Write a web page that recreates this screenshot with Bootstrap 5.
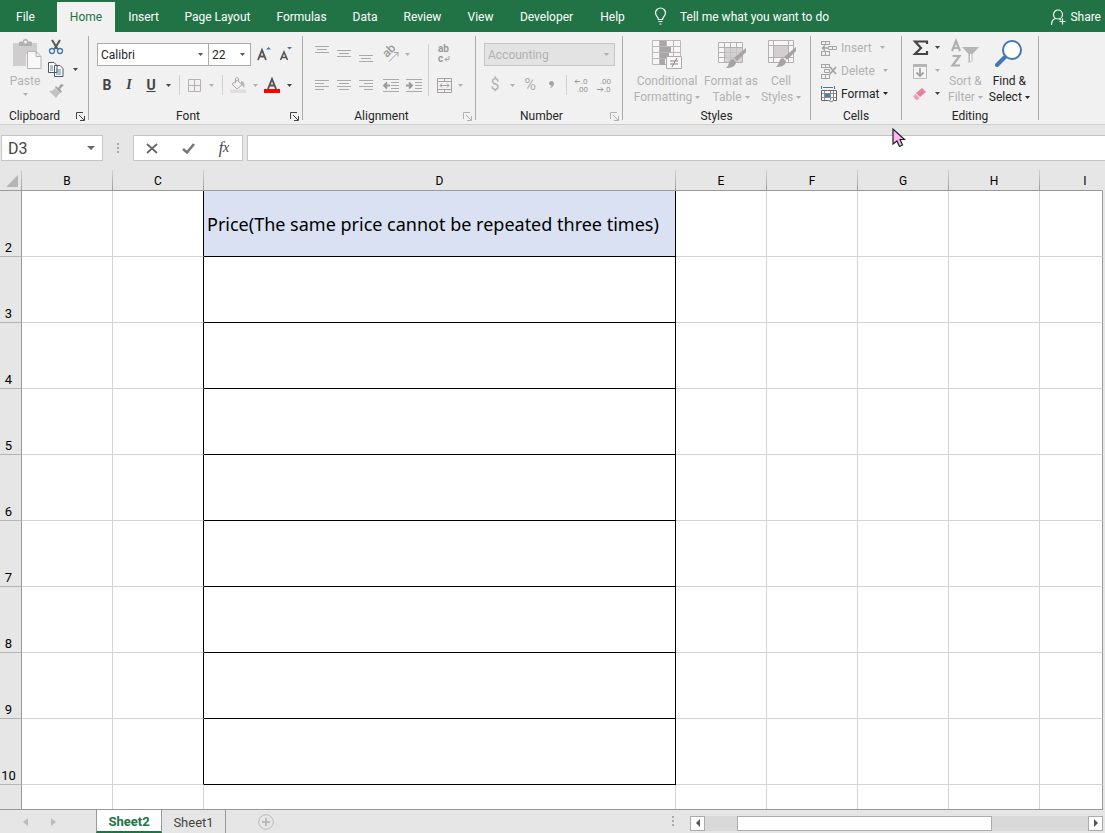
<!DOCTYPE html>
<html lang="en">
<head>
<meta charset="utf-8">
<meta name="viewport" content="width=device-width, initial-scale=1">
<title>Spreadsheet</title>
<link href="https://cdn.jsdelivr.net/npm/bootstrap@5.3.0/dist/css/bootstrap.min.css" rel="stylesheet">
<style>
  :root { --green: #217346; --chrome: #e6e6e6; --ribbon: #f1f1f1; --line: #ababab; --off: #b1b1b1; --ink: #444; }
  body { font: 12px/16px Roboto, "Liberation Sans", sans-serif; color: #262626; background: var(--chrome); }
  button, .menu a { white-space: nowrap; }
  svg { display: block; flex: none; overflow: visible; }

  /* menu strip */
  .menu { background: var(--green); height: 32px; padding-top: 2px; }
  .menu-tabs { display: grid; grid-template-columns: 57px 58px 57px 91px 77px 50px 65px 51px 81px 51px; }
  .menu a { color: #fff; text-decoration: none; line-height: 30px; text-align: center; }
  .menu .file-tab { text-align: left; padding-left: 16px; }
  .menu .on { background: var(--ribbon); color: var(--green); }

  /* ribbon */
  .ribbon { background: var(--ribbon); border-bottom: 1px solid #cfcfcf; height: 93px; padding-top: 4px; }
  .grp { display: flex; flex-direction: column; border-right: 1px solid var(--line); height: 84px; flex: none; }
  .grp-body { height: 72px; flex: none; padding-left: 8px; }
  .grp-body.tight { padding-left: 6px; }
  .grp-body.two-rows { padding-top: 7px; }
  .grp-name { display: grid; grid-template-columns: 1fr 15px; line-height: 16px; text-align: center; }
  .g-clip { width: 89px; } .g-font { width: 214px; } .g-align { width: 173px; }
  .g-num { width: 147px; } .g-style { width: 188px; } .g-cell { width: 91px; } .g-edit { width: 137px; }
  .tool { border: 0; background: none; padding: 0; color: var(--ink); display: flex; align-items: center; justify-content: center; height: 22px; }
  .tool:disabled { color: var(--off); }
  .big { flex-direction: column; justify-content: flex-start; height: 72px; line-height: 16px; }
  .big svg.pic { margin: 2px 0 3px; }
  .line { display: inline-flex; align-items: center; gap: 3px; }
  .black { color: #262626; }
  .bar-v { width: 1px; height: 20px; background: #d0d0d0; justify-self: center; }
  .bar-tall { grid-area: 1 / 6 / 3 / 7; height: 52px; }
  .tools { display: grid; align-items: center; }
  .t-font { grid-template-columns: 20px 24px 20px 14px 9px 20px 14px 8px 24px 10px 24px 10px; }
  .t-align { grid-template-columns: 22px 22px 22px 28px 18px 10px 22px 10px; row-gap: 9px; }
  .t-num { grid-template-columns: 22px 12px 24px 18px 12px 20px 24px; }
  .t-clip { grid-template-columns: 20px 12px; }
  .t-edit { grid-template-columns: 24px 10px; grid-auto-rows: 23px; }
  .t-style { grid-template-columns: 76px 52px 48px; }
  .t-cell .tool { height: 23px; }
  .gap-six { gap: 6px; }
  .pick { appearance: none; height: 23px; border: 1px solid #ababab; border-radius: 0; padding: 0 3px; font-size: 12px; line-height: 16px; color: #262626;
    background: #fff url("data:image/svg+xml,%3Csvg xmlns='http://www.w3.org/2000/svg' width='5' height='3'%3E%3Cpath d='M0 0h5L2.500 3z' fill='%23555'/%3E%3C/svg%3E") no-repeat right 5px center; }
  .pick:disabled { color: var(--off); opacity: 1; border-color: #c6c6c6;
    background: #e3e3e3 url("data:image/svg+xml,%3Csvg xmlns='http://www.w3.org/2000/svg' width='5' height='3'%3E%3Cpath d='M0 0h5L2.500 3z' fill='%23b1b1b1'/%3E%3C/svg%3E") no-repeat right 5px center; }
  .w-face { width: 112px; } .w-size { width: 43px; margin-left: -1px; } .w-fmt { width: 131px; }
  .glyph { font-size: 14px; }
  .serif { font-family: "Liberation Serif", serif; }

  /* formula bar */
  .fbar { height: 45px; padding: 10px 0 0 1px; }
  .box { background: #fff; border: 1px solid #c6c6c6; height: 26px; }
  .name-in { border: 0; outline: 0; width: 78px; padding: 0 6px; font-size: 16px; color: var(--ink); background: none; }
  .name-btn { width: 22px; }
  .dots { margin: 8px 14px 0; }
  .f-tools { display: grid; grid-template-columns: 36px 36px 36px; }
  .f-in { border-right: 0; outline: 0; min-width: 0; padding: 0 6px; }

  /* sheet */
  .sheet-wrap { overflow: hidden; min-height: 0; margin-right: 2px; border-bottom: 1px solid #999; }
  .sheet { table-layout: fixed; width: 100%; border-collapse: separate; border-spacing: 0; color: #000; }
  .sheet th { font-weight: 400; background: var(--chrome); padding: 0; }
  .sheet thead th { height: 21px; line-height: 18px; padding-top: 2px; text-align: center; border-bottom: 1px solid #999; border-right: 1px solid;
    border-image: linear-gradient(#d4d4d4, #999) 1; border-top: 0; border-left: 0; }
  .sheet thead th:last-child { border-right-color: transparent; border-image: none; border-bottom-color: #999; padding-left: 28px; }
  .sheet thead th:first-child svg { margin-left: auto; margin-right: 3px; }
  .sheet tbody th { text-align: center; vertical-align: bottom; border-right: 1px solid #999; border-bottom: 1px solid #b5b5b5; padding: 0 4px 0 0; font-size: 13px; line-height: 17px; white-space: nowrap; }
  .sheet tbody tr { height: 66px; }
  .sheet td { background: #fff; border-right: 1px solid #d4d4d4; border-bottom: 1px solid #d4d4d4; padding: 0; }
  .sheet td:last-child { border-right-color: #999; }
  .sheet .edge td:nth-child(3) { border-right-color: #000; }
  .sheet .edge td:nth-child(4) { border-right-color: #000; border-bottom-color: #000; }
  .sheet .edge .head-cell { background: #d9e1f2; font: 18px/24px "Noto Sans", sans-serif; padding-left: 3px; white-space: nowrap; }
  .c-row { width: 22px; } .c-std { width: 91px; } .c-price { width: 472px; }

  /* sheet tabs */
  .foot { height: 23px; font-size: 13px; }
  .foot-nav { width: 96px; padding-left: 18px; display: grid; grid-template-columns: 14px 14px 14px; }
  .s-tab { border: 0; background: none; padding: 2px 0 0; height: 23px; border-right: 1px solid #999; color: var(--ink); }
  .s-tab.now { background: #fff; color: var(--green); font-weight: 700; width: 66px; border-left: 1px solid #999; border-bottom: 2px solid var(--green); }
  .s-tab.next { width: 64px; }
  .track { width: 413px; height: 15px; margin: 3px 2px 0 0; background: #d9d9d9; }
  .track button { width: 15px; height: 15px; border: 1px solid #ababab; background: #fff; padding: 0; display: flex; align-items: center; justify-content: center; }
  .track .thumb { width: 255px; margin: 0 auto 0 32px; }
  .pointer { position: absolute; left: 892px; top: 128px; z-index: 5; }
</style>
</head>
<body class="vh-100 d-flex flex-column overflow-hidden position-relative">

<svg width="0" height="0" class="position-absolute" aria-hidden="true">
  <symbol id="dn" viewBox="0 0 5 3"><path d="M0 0h5L2.500 3z" fill="currentColor"/></symbol>
  <symbol id="launch" viewBox="0 0 9 9"><path d="M.5 7V.5H7M3 3l5 5M8.500 4v4.500H4" fill="none" stroke="currentColor"/></symbol>
  <symbol id="brush" viewBox="0 0 22 22"><path d="M21 1v4l-9 9-3-3z" fill="#a5a3a4"/><path d="M8 12l3 3c0 5-6 6-10 6 4-3 2-8 7-9z" fill="#a5a3a4"/></symbol>
</svg>

<header class="menu d-flex flex-shrink-0">
  <nav class="menu-tabs">
    <a class="file-tab" href="#">File</a><a class="on" href="#">Home</a><a href="#">Insert</a><a href="#">Page Layout</a><a href="#">Formulas</a><a href="#">Data</a><a href="#">Review</a><a href="#">View</a><a href="#">Developer</a><a href="#">Help</a>
  </nav>
  <a href="#" class="d-flex align-items-center ms-3"><svg class="me-2" width="18" height="18" viewBox="0 0 18 18" fill="none" stroke="#fff"><path d="M4.500 11.500C4.500 9 1.500 8 1.500 5a5 5 0 0 1 10 0c0 3-3 4-3 6.500zM4.500 13.500h4M5.500 16h2" stroke-width="1.200"/></svg>Tell me what you want to do</a>
  <a href="#" class="d-flex align-items-center ms-auto me-1"><svg class="me-1" width="15" height="17" viewBox="0 0 15 17" fill="none" stroke="#fff" stroke-width="1.200"><circle cx="7" cy="5.500" r="4.500"/><path d="M.5 16c0-4 2-6 4-6.500M8.500 10l1.500 1M11.500 9.500v6M8.500 12.500h6"/></svg>Share</a>
</header>

<div class="ribbon d-flex flex-shrink-0">
  <section class="grp g-clip">
    <div class="grp-body d-flex">
      <button class="tool big" disabled>
        <svg class="pic ms-1" width="30" height="32" viewBox="0 0 30 32"><path d="M1 5h7V3h3c0-3 5-3 5 0h3v2h6v11H14v12H1z" fill="#cfcdce"/><path d="M7 8V4h4c0-4 5-4 5 0h4v4z" fill="#b0b0b0"/><circle cx="13.500" cy="4" r="1.500" fill="#f1f1f1"/><path d="M15.500 13.500H24l5 5v12H15.500zM24 13.500v5h5" fill="#f8f8f8" stroke="#b5b5b5"/></svg>
        <span>Paste</span><svg class="mt-1" width="5" height="3"><use href="#dn"/></svg>
      </button>
      <div class="tools t-clip ms-1 align-content-start">
        <button class="tool" aria-label="Cut"><svg width="14" height="16" viewBox="0 0 14 16" fill="none"><path d="M3 1l5.500 9M11 1L5.500 10" stroke="#555" stroke-width="2"/><circle cx="3" cy="12" r="2.500" stroke="#3f76ae" stroke-width="1.300"/><circle cx="11" cy="12" r="2.500" stroke="#3f76ae" stroke-width="1.300"/></svg></button><span></span>
        <button class="tool" aria-label="Copy"><svg width="16" height="15" viewBox="0 0 16 15"><path d="M.5.5H6l3 3v7H.5zM6.500 3.500H12l3 3v8H6.500z" fill="#fff" stroke="#555"/><path d="M2 4h3M2 6h3M2 8h3M8 8h5M8 10h5M8 12h5" stroke="#4f82bd"/></svg></button>
        <button class="tool justify-content-end" aria-label="Copy options"><svg width="5" height="3"><use href="#dn"/></svg></button>
        <button class="tool" disabled aria-label="Format Painter"><svg width="17" height="15" viewBox="0 0 17 15"><path d="M16 1l-3-1-3 4-2-2-1 1 5 6 2-1-2-3z" fill="#a3a3a3"/><path d="M7 4l5 5-4 5L1 7c3 0 5-1 6-3z" fill="#c4c2c2"/></svg></button>
      </div>
    </div>
    <div class="grp-name"><span class="pe-1">Clipboard</span><button class="tool h-auto" aria-label="Clipboard settings"><svg width="9" height="9"><use href="#launch"/></svg></button></div>
  </section>

  <section class="grp g-font">
    <div class="grp-body two-rows">
      <div class="d-flex align-items-center">
        <select class="pick w-face" aria-label="Font"><option>Calibri</option></select>
        <select class="pick w-size" aria-label="Font size"><option>22</option></select>
        <button class="tool ms-1" aria-label="Increase font size"><svg width="18" height="18" viewBox="0 0 18 18"><path d="M3 14L7 4l4 10M4.500 10.500h5" fill="none" stroke="#555" stroke-width="1.800"/><path d="M11 3.500L13.500 1 16 3.500z" fill="#3f76ae"/></svg></button>
        <button class="tool ms-1" aria-label="Decrease font size"><svg width="18" height="18" viewBox="0 0 18 18"><path d="M3.500 14L7 6l3.500 8M4.500 11.500h5" fill="none" stroke="#555" stroke-width="1.600"/><path d="M10 1h5l-2.500 2.500z" fill="#3f76ae"/></svg></button>
      </div>
      <div class="tools t-font mt-2">
        <button class="tool glyph fw-bold" aria-label="Bold">B</button><button class="tool glyph serif fst-italic fw-bold" aria-label="Italic">I</button><button class="tool glyph fw-bold text-decoration-underline" aria-label="Underline">U</button><button class="tool" aria-label="Underline options"><svg width="5" height="3"><use href="#dn"/></svg></button>
        <span class="bar-v"></span>
        <button class="tool" disabled aria-label="Borders"><svg width="13" height="13" viewBox="0 0 13 13"><path d="M.5.5h12v12H.5zM6.500 0v13M0 6.500h13" fill="none" stroke="#b9b0b0"/></svg></button><button class="tool" disabled aria-label="Border options"><svg width="5" height="3"><use href="#dn"/></svg></button>
        <span class="bar-v"></span>
        <button class="tool" disabled aria-label="Fill colour"><svg width="16" height="16" viewBox="0 0 16 16"><path d="M5.500 6V2c0-2 3-2 3 0v3M2 7l5.500-4L12 8l-5 4z" fill="none" stroke="#aaa"/><path d="M11 4c4 1 4 4 3 7-1-1-1-3-3-4z" fill="#b5b5b5"/><path d="M0 12.500h16V16H0z" fill="#e3dde0"/></svg></button><button class="tool" disabled aria-label="Fill options"><svg width="5" height="3"><use href="#dn"/></svg></button>
        <button class="tool" aria-label="Font colour"><svg width="16" height="16" viewBox="0 0 16 16"><path d="M4 12L8 2l4 10M5.500 8.500h5" fill="none" stroke="#555" stroke-width="1.900"/><path d="M0 12h16v4H0z" fill="red"/></svg></button><button class="tool" aria-label="Font colour options"><svg width="5" height="3"><use href="#dn"/></svg></button>
      </div>
    </div>
    <div class="grp-name"><span>Font</span><button class="tool h-auto" aria-label="Font settings"><svg width="9" height="9"><use href="#launch"/></svg></button></div>
  </section>

  <section class="grp g-align">
    <div class="grp-body two-rows">
      <div class="tools t-align">
        <button class="tool" disabled aria-label="Top align"><svg width="14" height="18"><path d="M0 1.500h14M2 4.500h10M0 7.500h14" stroke="#aaa"/></svg></button>
        <button class="tool" disabled aria-label="Middle align"><svg width="14" height="18"><path d="M0 5.500h14M2 8.500h10M0 11.500h14" stroke="#aaa"/></svg></button>
        <button class="tool" disabled aria-label="Bottom align"><svg width="14" height="18"><path d="M0 10.500h14M2 13.500h10M0 16.500h14" stroke="#aaa"/></svg></button>
        <button class="tool" disabled aria-label="Orientation"><svg width="16" height="16" viewBox="0 0 16 16"><text transform="translate(4 12) rotate(-45)" font-size="12" font-weight="500" fill="#999">ab</text><path d="M6 15.500L15 6.500M11 6.500h4v4" fill="none" stroke="#a3a3a3"/></svg></button>
        <button class="tool justify-content-start" disabled aria-label="Orientation options"><svg width="5" height="3"><use href="#dn"/></svg></button>
        <span class="bar-v bar-tall"></span>
        <button class="tool" disabled aria-label="Wrap text"><svg width="14" height="18" viewBox="0 0 14 18" fill="#999"><text x="1" y="7" font-size="10" font-weight="700">ab</text><text x="1" y="17" font-size="10" font-weight="700">c</text><path d="M12 11v3.500H8M10 12.500l-2 2 2 2" fill="none" stroke="#a3a3a3"/></svg></button><span></span>
        <button class="tool" disabled aria-label="Align left"><svg width="14" height="10"><path d="M0 .5h14M0 3.500h9M0 6.500h14M0 9.500h9" stroke="#aaa"/></svg></button>
        <button class="tool" disabled aria-label="Centre"><svg width="14" height="10"><path d="M0 .5h14M2 3.500h10M0 6.500h14M2 9.500h10" stroke="#aaa"/></svg></button>
        <button class="tool" disabled aria-label="Align right"><svg width="14" height="10"><path d="M0 .5h14M5 3.500h9M0 6.500h14M5 9.500h9" stroke="#aaa"/></svg></button>
        <button class="tool" disabled aria-label="Decrease indent"><svg width="16" height="13" viewBox="0 0 16 13"><path d="M0 .5h16M8 3.500h8M8 6.500h8M8 9.500h8M0 12.500h16" stroke="#aaa"/><path d="M4 3.500l-3 3 3 3M1 6.500h6" fill="none" stroke="#999" stroke-width="1.800"/></svg></button>
        <button class="tool" disabled aria-label="Increase indent"><svg width="16" height="13" viewBox="0 0 16 13"><path d="M0 .5h16M9 3.500h7M9 6.500h7M9 9.500h7M0 12.500h16" stroke="#aaa"/><path d="M3 3.500l3 3-3 3M0 6.500h6" fill="none" stroke="#999" stroke-width="1.800"/></svg></button>
        <button class="tool" disabled aria-label="Merge"><svg width="15" height="15" viewBox="0 0 15 15"><path d="M.5.500h14v14H.5zM0 3.500h15M0 11.500h15M7.500 0v3M7.500 12v3" fill="none" stroke="#a3a3a3"/><path d="M3 7.500h9M5 5.500l-2 2 2 2M10 5.500l2 2-2 2" fill="none" stroke="#b09c9c"/></svg></button>
        <button class="tool" disabled aria-label="Merge options"><svg width="5" height="3"><use href="#dn"/></svg></button>
      </div>
    </div>
    <div class="grp-name"><span>Alignment</span><button class="tool h-auto" disabled aria-label="Alignment settings"><svg width="9" height="9"><use href="#launch"/></svg></button></div>
  </section>

  <section class="grp g-num">
    <div class="grp-body two-rows">
      <select class="pick w-fmt d-block" disabled aria-label="Number format"><option>Accounting</option></select>
      <div class="tools t-num mt-2">
        <button class="tool fs-6" disabled aria-label="Currency">$</button><button class="tool" disabled aria-label="Currency options"><svg width="5" height="3"><use href="#dn"/></svg></button><button class="tool fs-6" disabled aria-label="Percent">%</button>
        <button class="tool" disabled aria-label="Thousands"><svg width="5" height="8" viewBox="0 0 5 8"><path d="M2.500 0C6 0 6 6 .5 7.500 2 6 2.500 5 2.500 4.500-1 4.500-.5 0 2.500 0z" fill="#a3a3a3"/></svg></button>
        <span class="bar-v"></span>
        <button class="tool" disabled aria-label="Increase decimals"><svg width="16" height="15" viewBox="0 0 16 15" fill="#999"><text x="7" y="6" font-size="8">.0</text><text x="3" y="14" font-size="8">.00</text><path d="M6 3.500H1M3 1.500l-2 2 2 2" fill="none" stroke="#999"/></svg></button>
        <button class="tool" disabled aria-label="Decrease decimals"><svg width="16" height="15" viewBox="0 0 16 15" fill="#999"><text x="4" y="6" font-size="8">.00</text><text x="8" y="14" font-size="8">.0</text><path d="M1 11.500h6M5 9.500l2 2-2 2" fill="none" stroke="#999"/></svg></button>
      </div>
    </div>
    <div class="grp-name"><span>Number</span><button class="tool h-auto" disabled aria-label="Number settings"><svg width="9" height="9"><use href="#launch"/></svg></button></div>
  </section>

  <section class="grp g-style">
    <div class="grp-body tight tools t-style">
      <button class="tool big" disabled>
        <svg class="pic" width="30" height="32" viewBox="0 0 30 32"><path d="M.5 2.500h28v24H.5zM0 8.500h28M0 14.500h28M0 20.500h28M7.500 2v25M14.500 2v25M21.500 2v25" fill="#f7f5f6" stroke="#bcb8ba"/><path d="M8 3h6v5h-6zM8 9h11v5H8zM8 15h9v5H8zM8 21h5v6H8z" fill="#a9a6a8"/><path d="M14.500 18.500h15v12h-15z" fill="#f8f8f8" stroke="#aaa"/><path d="M18 23h8M18 26h8M25 20l-5 9" stroke="#8d7f83"/></svg>
        <span>Conditional</span><span class="line">Formatting <svg width="5" height="3"><use href="#dn"/></svg></span>
      </button>
      <button class="tool big" disabled>
        <svg class="pic ms-1" width="30" height="32" viewBox="0 0 30 32"><path d="M.5 4.500h24v20H.5zM0 9.500h24M0 14.500h24M0 19.500h24M6.500 4v20M12.500 4v20M18.500 4v20" fill="#f7f5f6" stroke="#b5b1b3"/><path d="M7 10h17v14H7z" fill="#cbc8ca" fill-opacity=".8"/><svg x="7" y="9" width="22" height="22"><use href="#brush"/></svg></svg>
        <span>Format as</span><span class="line">Table <svg width="5" height="3"><use href="#dn"/></svg></span>
      </button>
      <button class="tool big" disabled>
        <svg class="pic ms-1" width="30" height="32" viewBox="0 0 30 32"><path d="M.5 2.500h25v22H.5zM0 7.500h25M0 19.500h25M5.500 2v22M20.500 2v22" fill="#f7f5f6" stroke="#b5b1b3"/><path d="M6 8h14v11H6z" fill="#d5ced0"/><svg x="7" y="8" width="22" height="22"><use href="#brush"/></svg></svg>
        <span>Cell</span><span class="line">Styles <svg width="5" height="3"><use href="#dn"/></svg></span>
      </button>
    </div>
    <div class="grp-name d-block">Styles</div>
  </section>

  <section class="grp g-cell">
    <div class="grp-body tight t-cell">
      <div class="ps-1">
      <button class="tool" disabled><svg class="me-1" width="16" height="16" viewBox="0 0 16 16"><path d="M.5 1v4M4.500 1v4M8.500 1v4M.5 1.500H9M.5 4.500H9M.5 11v5M4.500 11v5M8.500 11v5M.5 11.500H9M.5 15.500H9M7.500 6.500h8v3h-8zM11.500 6.500v3" fill="none" stroke="#a3a3a3"/><path d="M7 8H1M4 5.500L1.500 8 4 10.500" fill="none" stroke="#a3a3a3" stroke-width="1.500"/></svg>Insert<svg class="ms-2" width="5" height="3"><use href="#dn"/></svg></button>
      <button class="tool" disabled><svg class="me-1" width="16" height="16" viewBox="0 0 16 16"><path d="M.5 1v4M4.500 1v4M8.500 1v4M.5 1.500H9M.5 4.500H9M.5 11v5M4.500 11v5M8.500 11v5M.5 11.500H9M.5 15.500H9M3.500 6.500h5v3h-5z" fill="none" stroke="#a3a3a3"/><path d="M9 4l6 7M15 4l-6 7" stroke="#a3a3a3" stroke-width="1.700"/></svg>Delete<svg class="ms-2" width="5" height="3"><use href="#dn"/></svg></button>
      <button class="tool black"><svg class="me-1" width="16" height="16" viewBox="0 0 16 16"><path d="M.5 0v3M13.500 0v3M2 1.500h10" fill="none" stroke="#3f76ae"/><path d="M.5 4.500h15v10h-3l-2 1-3-1H.5z" fill="#fff" stroke="#666"/><path d="M1 7.500h14M1 11.500h14M3.500 5v9M9.500 5v9M12.500 5v9" stroke="#8a8a8a"/><path d="M4 8h5v3H4z" fill="#4a80bd"/></svg>Format<svg class="ms-1" width="5" height="3"><use href="#dn"/></svg></button>
      </div>
    </div>
    <div class="grp-name d-block">Cells</div>
  </section>

  <section class="grp g-edit">
    <div class="grp-body tight d-flex gap-six">
      <div class="tools t-edit align-content-start">
        <button class="tool" aria-label="Sum"><svg width="15" height="16" viewBox="0 0 15 16"><path d="M14 4V1.500H2l6 6.500-6 6h12v-3" fill="none" stroke="#444" stroke-width="2.200"/></svg></button><button class="tool" aria-label="Sum options"><svg width="5" height="3"><use href="#dn"/></svg></button>
        <button class="tool" disabled aria-label="Fill"><svg width="14" height="16" viewBox="0 0 14 16"><path d="M.5 1.500h13v14H.5z" fill="#f4f4f4" stroke="#bbb"/><path d="M0 1h14v3H0z" fill="#b5b5b5"/><path d="M7 5v8M3.500 9.500L7 13l3.500-3.500" fill="none" stroke="#a3a3a3" stroke-width="1.800"/></svg></button><button class="tool" disabled aria-label="Fill options"><svg width="5" height="3"><use href="#dn"/></svg></button>
        <button class="tool" aria-label="Clear"><svg width="14" height="14" viewBox="0 0 14 14"><path d="M9 1l4 4-6 5-4-4z" fill="#e8809a"/><path d="M2.500 7l4 4-2 2H3L.5 10V9z" fill="#ee9db1"/></svg></button><button class="tool" aria-label="Clear options"><svg width="5" height="3"><use href="#dn"/></svg></button>
      </div>
      <button class="tool big" disabled>
        <svg class="pic" width="30" height="32" viewBox="0 0 30 32"><path d="M2 13L6 3l4 10M3.500 10h5M2.500 18h7l-7 9.500H10" fill="none" stroke="#b0b0b0" stroke-width="2.200"/><path d="M12 9h17l-6.500 7v7l-4 2v-9z" fill="#b5b5b5"/><path d="M20 16h1.500v7L20 23.500z" fill="#fff"/></svg>
        <span>Sort &amp;</span><span class="line">Filter <svg width="5" height="3"><use href="#dn"/></svg></span>
      </button>
      <button class="tool big black">
        <svg class="pic" width="30" height="32" viewBox="0 0 30 32"><circle cx="18" cy="12" r="9" fill="#fff" stroke="#4378b4" stroke-width="2"/><path d="M11 19l-8 8" stroke="#4378b4" stroke-width="4" stroke-linecap="round"/></svg>
        <span>Find &amp;</span><span class="line">Select <svg width="5" height="3"><use href="#dn"/></svg></span>
      </button>
    </div>
    <div class="grp-name d-block">Editing</div>
  </section>
</div>

<div class="fbar d-flex flex-shrink-0">
  <div class="box d-flex align-items-center"><input class="name-in" value="D3" aria-label="Name box"><button class="tool name-btn" aria-label="Names"><svg width="8" height="4" viewBox="0 0 8 4"><path d="M0 0h8L4 4z" fill="#666"/></svg></button></div>
  <svg class="dots" width="2" height="11"><path d="M0 0h2v2H0zM0 4h2v2H0zM0 8h2v2H0z" fill="#aaa"/></svg>
  <div class="box f-tools">
    <button class="tool h-100" aria-label="Cancel"><svg width="12" height="11" viewBox="0 0 12 11"><path d="M1 1l10 9M11 1L1 10" stroke="#666" stroke-width="1.700"/></svg></button>
    <button class="tool h-100" aria-label="Enter"><svg width="13" height="11" viewBox="0 0 13 11"><path d="M1 6l4 3.500L12 1" fill="none" stroke="#777" stroke-width="2.600"/></svg></button>
    <button class="tool h-100 fs-6 serif fst-italic" aria-label="Insert function">f<small>x</small></button>
  </div>
  <input class="box f-in flex-grow-1 ms-1" aria-label="Formula bar">
</div>

<main class="sheet-wrap flex-grow-1">
  <table class="sheet">
    <colgroup><col class="c-row"><col class="c-std"><col class="c-std"><col class="c-price"><col class="c-std"><col class="c-std"><col class="c-std"><col class="c-std"><col></colgroup>
    <thead><tr><th><svg width="12" height="12"><path d="M12 0v12H0z" fill="#b5b5b5"/></svg></th><th>B</th><th>C</th><th>D</th><th>E</th><th>F</th><th>G</th><th>H</th><th>I</th></tr></thead>
    <tbody>
      <tr class="edge"><th>2</th><td></td><td></td><td class="head-cell">Price(The same price cannot be repeated three times)</td><td></td><td></td><td></td><td></td><td></td></tr>
      <tr class="edge"><th>3</th><td></td><td></td><td></td><td></td><td></td><td></td><td></td><td></td></tr>
      <tr class="edge"><th>4</th><td></td><td></td><td></td><td></td><td></td><td></td><td></td><td></td></tr>
      <tr class="edge"><th>5</th><td></td><td></td><td></td><td></td><td></td><td></td><td></td><td></td></tr>
      <tr class="edge"><th>6</th><td></td><td></td><td></td><td></td><td></td><td></td><td></td><td></td></tr>
      <tr class="edge"><th>7</th><td></td><td></td><td></td><td></td><td></td><td></td><td></td><td></td></tr>
      <tr class="edge"><th>8</th><td></td><td></td><td></td><td></td><td></td><td></td><td></td><td></td></tr>
      <tr class="edge"><th>9</th><td></td><td></td><td></td><td></td><td></td><td></td><td></td><td></td></tr>
      <tr class="edge"><th>10</th><td></td><td></td><td></td><td></td><td></td><td></td><td></td><td></td></tr>
      <tr><th></th><td></td><td></td><td></td><td></td><td></td><td></td><td></td><td></td></tr>
    </tbody>
  </table>
</main>

<footer class="foot d-flex flex-shrink-0 align-items-center">
  <div class="foot-nav"><button class="tool" disabled aria-label="Previous sheet"><svg width="5" height="8"><path d="M5 0v8L0 4z" fill="#bbb"/></svg></button><span></span><button class="tool" disabled aria-label="Next sheet"><svg width="5" height="8"><path d="M0 0v8l5-4z" fill="#bbb"/></svg></button></div>
  <button class="s-tab now">Sheet2</button><button class="s-tab next">Sheet1</button>
  <button class="tool ms-4 px-2" aria-label="New sheet"><svg width="16" height="16" viewBox="0 0 16 16" fill="none" stroke="#bbb"><circle cx="8" cy="8" r="7.300"/><path d="M8 4v8M4 8h8" stroke-width="2"/></svg></button>
  <svg class="ms-auto me-3" width="2" height="11"><path d="M0 0h2v2H0zM0 4h2v2H0zM0 8h2v2H0z" fill="#aaa"/></svg>
  <div class="track d-flex"><button aria-label="Scroll left"><svg width="4" height="8"><path d="M4 0v8L0 4z" fill="#555"/></svg></button><button class="thumb" aria-label="Scroll thumb"></button><button aria-label="Scroll right"><svg width="4" height="8"><path d="M0 0v8l4-4z" fill="#555"/></svg></button></div>
</footer>

<svg class="pointer" width="14" height="20" viewBox="0 0 14 20" aria-hidden="true"><path d="M1 1v15l4-3 2.500 5.500 3-1.500L8 11.500h4.500z" fill="#fbb8f4" stroke="#222" stroke-width="1.200"/></svg>
<script src="https://cdn.jsdelivr.net/npm/bootstrap@5.3.0/dist/js/bootstrap.bundle.min.js"></script>
</body>
</html>
